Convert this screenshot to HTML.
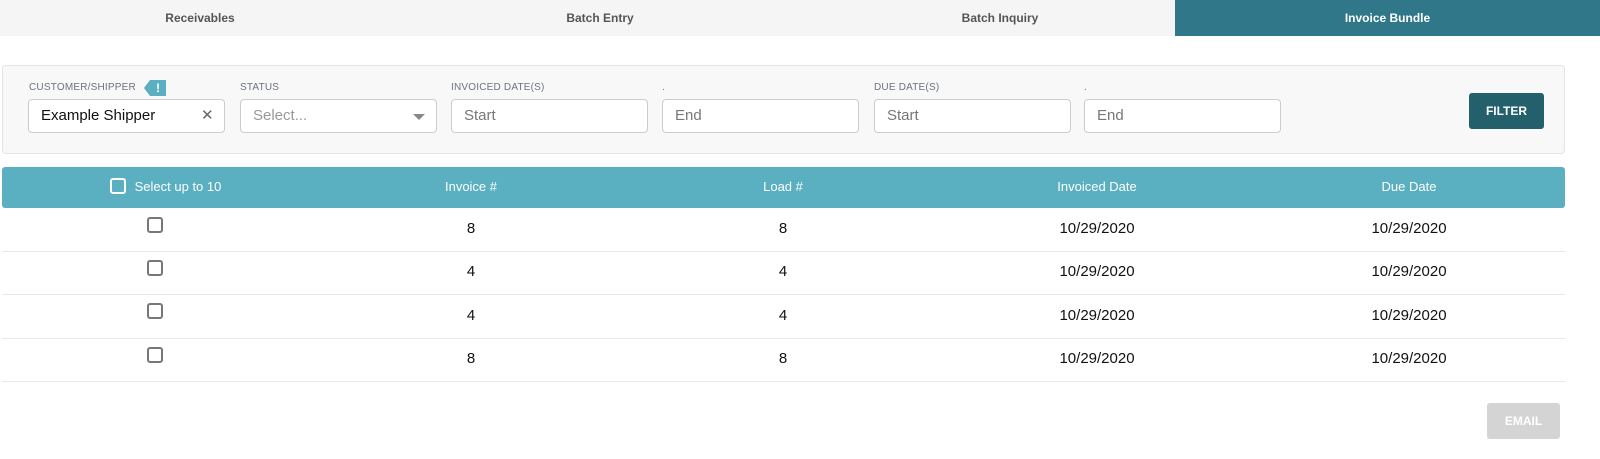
<!DOCTYPE html>
<html><head><style>
body{margin:0;width:1600px;height:459px;background:#fff;font-family:"Liberation Sans",sans-serif;position:relative;overflow:hidden}
.tab{position:absolute;top:0;height:36px;width:400px;background:#f5f5f5;color:#555;font-size:12px;font-weight:bold;text-align:center;line-height:36px}
.panel{position:absolute;left:2px;top:65px;width:1561px;height:87px;background:#f8f8f8;border:1px solid #e4e4e4;border-radius:4px}
.lbl{position:absolute;top:82px;font-size:10px;color:#6b7280;letter-spacing:.2px}
.inp{position:absolute;top:99px;height:32px;width:195px;background:#fff;border:1px solid #ccc;border-radius:4px;font-size:15px;line-height:32px;box-sizing:content-box;text-indent:12px;color:#777}
.hdr{position:absolute;left:2px;top:167px;width:1563px;height:41px;background:#5aafc0;border-radius:3px}
.h{position:absolute;top:179px;color:#fff;font-size:13px;transform:translateX(-50%)}
.c{position:absolute;font-size:15px;color:#111;transform:translateX(-50%)}
.line{position:absolute;left:2px;width:1563px;height:1px;background:#e8e8e8}
.cb{position:absolute;width:12px;height:12px;border:2px solid #777;border-radius:3px;background:#fff}
</style></head><body>
<div class="tab" style="left:0">Receivables</div>
<div class="tab" style="left:400px">Batch Entry</div>
<div class="tab" style="left:800px">Batch Inquiry</div>
<div class="tab" style="left:1175px;width:425px;background:#2f7789;color:#fff">Invoice Bundle</div>
<div class="panel"></div>
<div class="lbl" style="left:29px">CUSTOMER/SHIPPER</div>
<div style="position:absolute;left:144px;top:80px;width:0;height:0;border-top:8px solid transparent;border-bottom:8px solid transparent;border-right:6px solid #5aafc0"></div>
<div style="position:absolute;left:150px;top:80px;width:16px;height:16px;background:#5aafc0;color:#fff;font-size:12px;font-weight:bold;text-align:center;line-height:16px">!</div>
<div class="lbl" style="left:240px">STATUS</div>
<div class="lbl" style="left:451px">INVOICED DATE(S)</div>
<div class="lbl" style="left:662px">.</div>
<div class="lbl" style="left:874px">DUE DATE(S)</div>
<div class="lbl" style="left:1084px">.</div>
<div class="inp" style="left:28px;color:#111">Example Shipper<span style="position:absolute;left:172px;color:#666;text-indent:0">✕</span></div>
<div class="inp" style="left:240px;color:#999">Select...<span style="position:absolute;left:172px;top:14px;border-left:6px solid transparent;border-right:6px solid transparent;border-top:6px solid #888"></span></div>
<div class="inp" style="left:451px">Start</div>
<div class="inp" style="left:662px">End</div>
<div class="inp" style="left:874px">Start</div>
<div class="inp" style="left:1084px">End</div>
<div style="position:absolute;left:1469px;top:93px;width:75px;height:36px;background:#23606c;border-radius:3px;color:#fff;font-size:12px;font-weight:bold;text-align:center;line-height:36px">FILTER</div>
<div class="hdr"></div>
<div class="cb" style="left:110px;top:178px;border-color:#fff;background:transparent"></div>
<div class="h" style="left:178px">Select up to 10</div>
<div class="h" style="left:471px">Invoice #</div>
<div class="h" style="left:783px">Load #</div>
<div class="h" style="left:1097px">Invoiced Date</div>
<div class="h" style="left:1409px">Due Date</div>
<div class="cb" style="left:147px;top:217px"></div>
<div class="c" style="left:471px;top:220px">8</div><div class="c" style="left:783px;top:220px">8</div><div class="c" style="left:1097px;top:220px">10/29/2020</div><div class="c" style="left:1409px;top:220px">10/29/2020</div>
<div class="line" style="top:251px"></div>
<div class="cb" style="left:147px;top:260px"></div>
<div class="c" style="left:471px;top:263px">4</div><div class="c" style="left:783px;top:263px">4</div><div class="c" style="left:1097px;top:263px">10/29/2020</div><div class="c" style="left:1409px;top:263px">10/29/2020</div>
<div class="line" style="top:294px"></div>
<div class="cb" style="left:147px;top:303px"></div>
<div class="c" style="left:471px;top:307px">4</div><div class="c" style="left:783px;top:307px">4</div><div class="c" style="left:1097px;top:307px">10/29/2020</div><div class="c" style="left:1409px;top:307px">10/29/2020</div>
<div class="line" style="top:338px"></div>
<div class="cb" style="left:147px;top:347px"></div>
<div class="c" style="left:471px;top:350px">8</div><div class="c" style="left:783px;top:350px">8</div><div class="c" style="left:1097px;top:350px">10/29/2020</div><div class="c" style="left:1409px;top:350px">10/29/2020</div>
<div class="line" style="top:381px"></div>
<div style="position:absolute;left:1487px;top:403px;width:73px;height:36px;background:#d4d4d4;border-radius:3px;color:#fff;font-size:12px;font-weight:bold;text-align:center;line-height:36px">EMAIL</div>
</body></html>
